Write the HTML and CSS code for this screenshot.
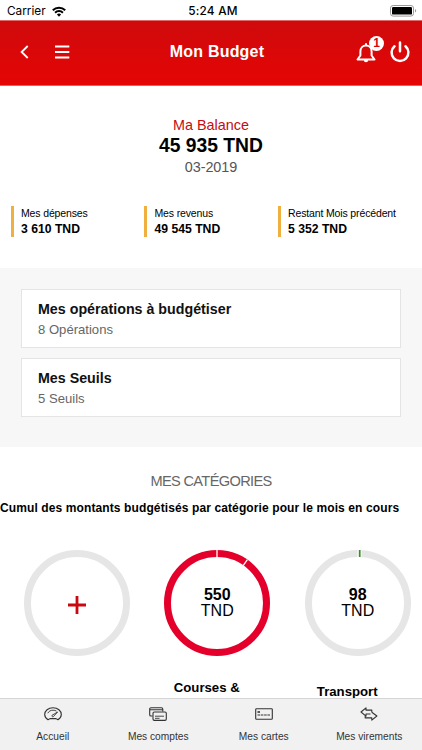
FILE: index.html
```html
<!DOCTYPE html>
<html lang="fr">
<head>
<meta charset="utf-8">
<title>Mon Budget</title>
<link rel="stylesheet" href="styles.css">
</head>
<body>
<div class="screen">
  <div class="status">
    <div class="carrier"><span>Carrier</span>
      <svg width="14" height="11" viewBox="0 0 14 11" fill="none" stroke="#000" stroke-width="2"><path d="M.8 4.2a8.8 8.8 0 0 1 12.4 0M3.1 6.7a5.5 5.5 0 0 1 7.8 0"/><path d="M7 10.7L4.9 8.6a3 3 0 0 1 4.2 0z" fill="#000" stroke="none"/></svg>
    </div>
    <div class="time">5:24 AM</div>
    <svg class="battery" width="27" height="12" viewBox="0 0 27 12"><rect x=".5" y=".5" width="23" height="10.6" rx="2.6" fill="#fff" stroke="#999"/><rect x="2" y="2" width="20" height="7.6" rx="1.2"/><path d="M25 4v3.6q1.2-.6 1.2-1.8T25 4z" fill="#999"/></svg>
  </div>
  <header class="header">
    <div class="tools">
      <svg width="9" height="14" viewBox="0 0 9 14" fill="none" stroke="#fff" stroke-width="1.8"><path d="M7.7 1L1.6 7l6.1 6"/></svg>
      <svg width="15" height="14" viewBox="0 0 15 14" stroke="#fff" stroke-width="2"><path d="M0 1.6h14.3M0 7h14.3M0 12.4h14.3"/></svg>
    </div>
    <h1>Mon Budget</h1>
    <div class="tools tools-right">
      <div class="bell">
        <svg width="20" height="21" viewBox="0 0 20 21" fill="none" stroke="#fff" stroke-width="2" stroke-linejoin="round"><path d="M1.500 17.500h17L15.600 13.500V9.500C15.600 5.800 13 3.500 10 3.500S4.400 5.800 4.400 9.500v4zM10 1.300v2"/><path d="M7.800 18h4.400a2.200 2.200 0 0 1-4.400 0z" fill="#fff" stroke="none"/></svg>
        <span class="badge">1</span>
      </div>
      <svg width="20" height="22" viewBox="0 0 20 22" fill="none" stroke="#fff" stroke-width="2.5" stroke-linecap="round"><path d="M10 1.500v8.800M4.500 5.200a8.400 8.400 0 1 0 11 0"/></svg>
    </div>
  </header>
  <section class="summary">
    <div class="bal-label">Ma Balance</div>
    <div class="bal-value">45 935 TND</div>
    <div class="bal-date">03-2019</div>
    <div class="stats">
      <div class="stat"><div>Mes dépenses</div><b>3 610 TND</b></div>
      <div class="stat"><div>Mes revenus</div><b>49 545 TND</b></div>
      <div class="stat"><div>Restant Mois précédent</div><b>5 352 TND</b></div>
    </div>
  </section>
  <section class="cards">
    <div class="card"><h2>Mes opérations à budgétiser</h2><p>8 Opérations</p></div>
    <div class="card"><h2>Mes Seuils</h2><p>5 Seuils</p></div>
  </section>
  <section class="categories">
    <h3>MES CATÉGORIES</h3>
    <p class="cumul">Cumul des montants budgétisés par catégorie pour le mois en cours</p>
    <div class="rings">
      <div class="category">
        <div class="ring"><svg class="plus" width="18" height="18" viewBox="0 0 18 18" stroke="#c80a10" stroke-width="2.800"><path d="M0 9h18M9 0v18"/></svg></div>
      </div>
      <div class="category">
        <div class="ring red">
          <svg class="ticks" width="106" height="106" viewBox="0 0 106 106" stroke="#fff" stroke-width="1.300"><path d="M53 0v8"/><path d="M53 0v8" transform="rotate(35 53 53)"/></svg>
          <b>550</b><span>TND</span>
        </div>
        <div class="name">Courses &amp;</div>
      </div>
      <div class="category">
        <div class="ring">
          <svg class="ticks" width="106" height="106" viewBox="0 0 106 106" stroke-width="1.800"><path d="M54.500 0v7" stroke="#fff" stroke-width="4"/><path d="M54.700 0v7" stroke="#3f8a2c"/></svg>
          <b>98</b><span>TND</span>
        </div>
        <div class="name low">Transport</div>
      </div>
    </div>
  </section>
  <nav class="nav">
    <div class="item"><svg width="18" height="14" viewBox="0 0 18 14" fill="none" stroke="#333" stroke-width="1.100" stroke-linejoin="round"><path d="M4 12.800C1.800 11.500.7 9.700.7 7.600.7 3.700 4.200.8 9 .8s8.300 2.900 8.300 6.800c0 2.100-1.100 3.900-3.300 5.200l-2-1.200H6z"/><path d="M3.800 6.200C4.800 4.200 6.700 3.200 9 3.200c1.300 0 2.500.3 3.500.9" stroke-width=".9"/><path d="M13.600 5L8 8.300a1 1 0 0 0 1.300 1.400z" stroke-width=".9"/></svg><span>Accueil</span></div>
    <div class="item"><svg width="18" height="14" viewBox="0 0 18 14" fill="none" stroke="#333" stroke-width="1.100"><path d="M3.500 9H2A1.300 1.300 0 0 1 .7 7.700V2A1.300 1.300 0 0 1 2 .7h10.500A1.300 1.300 0 0 1 13.800 2v2.500M1 2.800h12.500"/><rect x="4" y="5" width="13.300" height="8.400" rx="1.300"/><path d="M6 9.200h9M6 11.300h4.500" stroke-width=".9"/></svg><span>Mes comptes</span></div>
    <div class="item"><svg width="18" height="14" viewBox="0 0 18 14" fill="none" stroke="#333" stroke-width="1.100"><rect x=".7" y="1.700" width="16.600" height="10.600" rx=".8"/><path d="M2.500 5h2.500" stroke-width="1.600"/><path d="M2.500 8h12.500" stroke-dasharray="2.600 .7"/></svg><span>Mes cartes</span></div>
    <div class="item"><svg width="18" height="14" viewBox="0 0 18 14" fill="none" stroke="#333" stroke-width="1.100" stroke-linejoin="round"><path d="M11.800 5.200V3.100H6V.9L1 5l5 4.100V7h4.500"/><path d="M11.800 5.200L16.900 9l-5.100 4.100v-2.200H5.200V8.800"/></svg><span>Mes virements</span></div>
  </nav>
</div>
</body>
</html>
```
FILE: styles.css
```css
* { box-sizing: border-box; }
body { margin: 0; background: #fff; font-family: "Liberation Sans", Arial, sans-serif; color: #000; }
h1, h2, h3, p { margin: 0; }
svg { display: block; flex: none; }
.screen { width: 422px; height: 750px; overflow: hidden; display: flex; flex-direction: column; }
.status { height: 20px; flex: none; display: grid; grid-template-columns: 1fr auto 1fr; align-items: center; padding: 2px 5px 0 7px; font-size: 11.8px; line-height: 18px; font-family: Inter, "Liberation Sans", sans-serif; }
.carrier { display: flex; align-items: center; gap: 6px; }
.time { font-weight: 500; letter-spacing: .25px; padding-left: 2px; }
.battery { justify-self: end; }
.header { height: 66px; flex: none; background: linear-gradient(#cf0a0c, #e50505); border-top: 1px solid #e4686a; border-bottom: 1px solid #c96b6b; display: grid; grid-template-columns: 126px 1fr 114px; align-items: center; padding-bottom: 2px; color: #fff; }
.header h1 { font-size: 16px; line-height: 20px; letter-spacing: .2px; text-align: center; }
.tools { display: flex; align-items: center; gap: 26px; padding-left: 20px; }
.tools-right { gap: 14px; justify-content: flex-end; padding: 0 12px 0 0; }
.bell { position: relative; }
.badge { position: absolute; left: 13px; top: -6px; width: 15px; height: 15px; border-radius: 50%; background: #fff; color: #d50909; font-size: 12px; line-height: 15px; font-weight: 700; text-align: center; }
.summary { height: 182px; flex: none; padding-top: 29px; text-align: center; }
.bal-label { font-size: 14.4px; line-height: 20px; color: #c60c12; }
.bal-value { font-size: 19.3px; line-height: 21px; font-weight: 700; }
.bal-date { font-size: 14.4px; line-height: 22px; letter-spacing: -.05px; color: #555; }
.stats { margin: 28px 0 0 10.5px; display: grid; grid-template-columns: 133.5px 133.5px 1fr; text-align: left; }
.stat { height: 31px; border-left: 3px solid #f0b040; padding-left: 7.5px; font-size: 10.5px; line-height: 15px; letter-spacing: -.14px; white-space: nowrap; }
.stat b { display: block; font-size: 12.2px; line-height: 17px; letter-spacing: 0; }
.cards { height: 179px; flex: none; background: #f7f7f7; padding: 21px 21px 0; display: flex; flex-direction: column; gap: 10px; }
.card { height: 59px; background: #fff; border: 1px solid #e4e4e4; padding: 9px 16px; }
.card h2 { font-size: 14.25px; line-height: 21px; color: #111; }
.card p { font-size: 13.1px; line-height: 20px; color: #666; }
.categories { flex: 1; min-height: 0; overflow: hidden; padding-top: 24px; }
.categories h3 { font-size: 14.6px; line-height: 20px; font-weight: 400; letter-spacing: -.65px; color: #666; text-align: center; }
.cumul { margin-top: 9px; font-size: 12px; line-height: 16px; font-weight: 700; letter-spacing: .11px; white-space: nowrap; }
.rings { margin: 34px 0 0 6.5px; display: grid; grid-template-columns: repeat(3, 140.5px); }
.category { display: flex; flex-direction: column; align-items: center; }
.ring { position: relative; width: 106px; height: 106px; border: 7px solid #e6e6e6; border-radius: 50%; display: flex; flex-direction: column; align-items: center; justify-content: center; font-size: 16px; line-height: 16px; }
.ring.red { border-color: #e4002b; }
.ticks { position: absolute; left: -7px; top: -7px; }
.plus { margin-top: 3px; }
.name { margin: 24px 0 0 -21px; font-size: 13.2px; line-height: 16px; font-weight: 700; }
.name.low { margin-top: 28px; }
.nav { height: 52px; flex: none; background: #f1f1f1; border-top: 1px solid #d5d5d5; display: grid; grid-template-columns: repeat(4, 1fr); }
.item { display: flex; flex-direction: column; align-items: center; justify-content: space-between; padding: 8px 0 6px; font-size: 10.2px; line-height: 14px; color: #333; }
```
